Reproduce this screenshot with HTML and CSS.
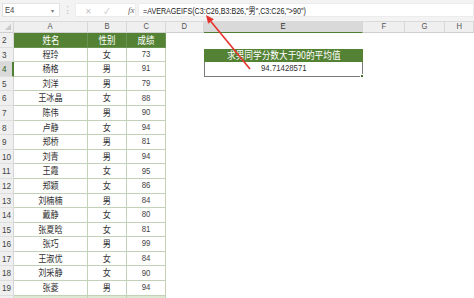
FILE: index.html
```html
<!DOCTYPE html>
<html lang="zh">
<head>
<meta charset="utf-8">
<link rel="stylesheet" href="styles.css">
</head>
<body>
<div class="app">
  <div class="fbar">
    <div class="namebox"><span class="t nb-text">E4</span><span class="nb-arrow">▾</span></div>
    <div class="dots">⁝</div>
    <div class="btns"><span class="btn-x">✕</span><span class="btn-ok">✓</span><span class="btn-fx">fx</span></div>
    <div class="formula"><span class="ft">=AVERAGEIFS(C3:C26,B3:B26,"男",C3:C26,"&gt;90")</span></div>
  </div>
  <div class="sheet">
    <div class="row hrow">
      <div class="corner"><span class="tri"></span></div>
      <div class="ch"><span class="t">A</span></div><div class="ch"><span class="t">B</span></div><div class="ch"><span class="t">C</span></div><div class="ch"><span class="t">D</span></div><div class="ch ch-act"><span class="t">E</span></div><div class="ch"><span class="t">F</span></div><div class="ch"><span class="t">G</span></div><div class="ch"><span class="t">H</span></div>
    </div>
    <div class="row">
      <div class="rh"><span class="t">2</span></div><div class="hd"><span class="t">姓名</span></div><div class="hd"><span class="t">性别</span></div><div class="hd"><span class="t">成绩</span></div><div class="c"></div><div class="c"></div><div class="c"></div><div class="c"></div><div class="c"></div>
    </div>
    <div class="row">
      <div class="rh"><span class="t">3</span></div><div class="td"><span class="t">程玲</span></div><div class="td"><span class="t">女</span></div><div class="td"><span class="t num">73</span></div><div class="c"></div><div class="c ghd"><span class="t">求男同学分数大于90的平均值</span></div><div class="c"></div><div class="c"></div><div class="c"></div>
    </div>
    <div class="row">
      <div class="rh rh-act"><span class="t">4</span></div><div class="td"><span class="t">杨格</span></div><div class="td"><span class="t">男</span></div><div class="td"><span class="t num">91</span></div><div class="c"></div><div class="c gval"><span class="t num">94.71428571</span><span class="handle"></span></div><div class="c"></div><div class="c"></div><div class="c"></div>
    </div>
    <div class="row">
      <div class="rh"><span class="t">5</span></div><div class="td"><span class="t">刘洋</span></div><div class="td"><span class="t">男</span></div><div class="td"><span class="t num">79</span></div><div class="c"></div><div class="c"></div><div class="c"></div><div class="c"></div><div class="c"></div>
    </div>
    <div class="row">
      <div class="rh"><span class="t">6</span></div><div class="td"><span class="t">王冰晶</span></div><div class="td"><span class="t">女</span></div><div class="td"><span class="t num">88</span></div><div class="c"></div><div class="c"></div><div class="c"></div><div class="c"></div><div class="c"></div>
    </div>
    <div class="row">
      <div class="rh"><span class="t">7</span></div><div class="td"><span class="t">陈伟</span></div><div class="td"><span class="t">男</span></div><div class="td"><span class="t num">90</span></div><div class="c"></div><div class="c"></div><div class="c"></div><div class="c"></div><div class="c"></div>
    </div>
    <div class="row">
      <div class="rh"><span class="t">8</span></div><div class="td"><span class="t">卢静</span></div><div class="td"><span class="t">女</span></div><div class="td"><span class="t num">94</span></div><div class="c"></div><div class="c"></div><div class="c"></div><div class="c"></div><div class="c"></div>
    </div>
    <div class="row">
      <div class="rh"><span class="t">9</span></div><div class="td"><span class="t">郑桥</span></div><div class="td"><span class="t">男</span></div><div class="td"><span class="t num">81</span></div><div class="c"></div><div class="c"></div><div class="c"></div><div class="c"></div><div class="c"></div>
    </div>
    <div class="row">
      <div class="rh"><span class="t">10</span></div><div class="td"><span class="t">刘青</span></div><div class="td"><span class="t">男</span></div><div class="td"><span class="t num">94</span></div><div class="c"></div><div class="c"></div><div class="c"></div><div class="c"></div><div class="c"></div>
    </div>
    <div class="row">
      <div class="rh"><span class="t">11</span></div><div class="td"><span class="t">王霞</span></div><div class="td"><span class="t">女</span></div><div class="td"><span class="t num">95</span></div><div class="c"></div><div class="c"></div><div class="c"></div><div class="c"></div><div class="c"></div>
    </div>
    <div class="row">
      <div class="rh"><span class="t">12</span></div><div class="td"><span class="t">郑颖</span></div><div class="td"><span class="t">女</span></div><div class="td"><span class="t num">86</span></div><div class="c"></div><div class="c"></div><div class="c"></div><div class="c"></div><div class="c"></div>
    </div>
    <div class="row">
      <div class="rh"><span class="t">13</span></div><div class="td"><span class="t">刘楠楠</span></div><div class="td"><span class="t">男</span></div><div class="td"><span class="t num">84</span></div><div class="c"></div><div class="c"></div><div class="c"></div><div class="c"></div><div class="c"></div>
    </div>
    <div class="row">
      <div class="rh"><span class="t">14</span></div><div class="td"><span class="t">戴静</span></div><div class="td"><span class="t">女</span></div><div class="td"><span class="t num">80</span></div><div class="c"></div><div class="c"></div><div class="c"></div><div class="c"></div><div class="c"></div>
    </div>
    <div class="row">
      <div class="rh"><span class="t">15</span></div><div class="td"><span class="t">张夏晗</span></div><div class="td"><span class="t">女</span></div><div class="td"><span class="t num">81</span></div><div class="c"></div><div class="c"></div><div class="c"></div><div class="c"></div><div class="c"></div>
    </div>
    <div class="row">
      <div class="rh"><span class="t">16</span></div><div class="td"><span class="t">张巧</span></div><div class="td"><span class="t">男</span></div><div class="td"><span class="t num">99</span></div><div class="c"></div><div class="c"></div><div class="c"></div><div class="c"></div><div class="c"></div>
    </div>
    <div class="row">
      <div class="rh"><span class="t">17</span></div><div class="td"><span class="t">王淑优</span></div><div class="td"><span class="t">女</span></div><div class="td"><span class="t num">84</span></div><div class="c"></div><div class="c"></div><div class="c"></div><div class="c"></div><div class="c"></div>
    </div>
    <div class="row">
      <div class="rh"><span class="t">18</span></div><div class="td"><span class="t">刘采静</span></div><div class="td"><span class="t">女</span></div><div class="td"><span class="t num">90</span></div><div class="c"></div><div class="c"></div><div class="c"></div><div class="c"></div><div class="c"></div>
    </div>
    <div class="row">
      <div class="rh"><span class="t">19</span></div><div class="td"><span class="t">张菱</span></div><div class="td"><span class="t">男</span></div><div class="td"><span class="t num">94</span></div><div class="c"></div><div class="c"></div><div class="c"></div><div class="c"></div><div class="c"></div>
    </div>
    <div class="row">
      <div class="rh"></div><div class="td band"></div><div class="td band"></div><div class="td band"></div><div class="c"></div><div class="c"></div><div class="c"></div><div class="c"></div><div class="c"></div>
    </div>
  </div>
  <svg class="arrow" width="474" height="298" viewBox="0 0 474 298">
    <line x1="250" y1="69" x2="210.9" y2="21.4" stroke="#e5322d" stroke-width="1.6"/>
    <polygon points="206,15 213.9,19.2 208.1,23.7" fill="#e5322d"/>
  </svg>
</div>
</body>
</html>
```
FILE: styles.css
```css
* { box-sizing: border-box; margin: 0; padding: 0; }
html, body { width: 474px; height: 298px; overflow: hidden; background: #fff; }
body {
  font-family: "Noto Sans CJK SC", "Noto Sans", sans-serif;
  color: #333;
}
.app { position: relative; width: 474px; height: 298px; overflow: hidden; }

.t { display: inline-block; transform: scaleX(0.85); white-space: nowrap; }

/* formula bar */
.fbar {
  height: 21.7px;
  background: #f3f3f3;
  border-bottom: 1px solid #dadada;
  display: flex;
  align-items: center;
  padding: 0 0 0 2px;
}
.namebox {
  width: 58px; height: 14px;
  background: #fff;
  border: 1px solid #e2e2e2;
  display: flex; align-items: center; justify-content: space-between;
  padding: 0 5px 0 2px;
  font-family: "Liberation Sans", sans-serif;
  font-size: 9px; color: #444;
}
.nb-text { transform-origin: left center; }
.nb-arrow { font-size: 6px; color: #777; }
.dots { width: 15px; text-align: center; color: #c4c4c4; font-size: 10px; line-height: 1; }
.btns {
  width: 61px; height: 14px; background: #fff;
  border: 1px solid #ececec;
  display: flex; align-items: center;
  padding-left: 9px;
  font-size: 8px; color: #c2c2c2;
}
.btn-x { width: 19px; }
.btn-ok { width: 24px; }
.btn-fx { font-family: "Liberation Serif", serif; font-style: italic; font-size: 9px; color: #666; }
.formula {
  flex: 1; height: 14px; margin-left: 2px;
  background: #fff;
  border: 1px solid #ececec;
  padding-left: 4px;
  display: flex; align-items: center;
  font-family: "Liberation Sans", "Noto Sans CJK SC", sans-serif;
  font-size: 8.8px; color: #222; white-space: nowrap;
}
.ft { display: inline-block; transform: scaleX(0.81); transform-origin: left center; }

/* sheet */
.sheet { display: flex; flex-direction: column; }
.row {
  display: grid;
  grid-template-columns: 14px 74px 39px 39px 38px 159px 42px 40px 29px;
  height: 14.6px;
}
.row.hrow { height: 11.3px; }
.row > div {
  display: flex; align-items: center; justify-content: center;
  white-space: nowrap; overflow: hidden;
  font-size: 9.6px; line-height: 1;
}
.corner { background: #efefef; border-right: 1px solid #d6d6d6; border-bottom: 1px solid #cfcfcf; position: relative; }
.tri {
  position: absolute; right: 2px; bottom: 2px;
  width: 0; height: 0;
  border-left: 6px solid transparent;
  border-bottom: 6px solid #c9c9c9;
}
.ch {
  background: #efefef;
  border-right: 1px solid #d8d8d8;
  border-bottom: 1px solid #cfcfcf;
  font-family: "Liberation Sans", sans-serif;
  color: #555;
  font-size: 9px !important;
}
.ch-act { background: #d9d9d9; border-bottom: 1px solid #4f7f34; color: #333; }
.rh {
  background: #efefef;
  border-right: 1px solid #d6d6d6;
  border-bottom: 1px solid #dedede;
  font-family: "Liberation Sans", sans-serif;
  color: #444;
  justify-content: flex-start !important;
  padding-left: 2px;
  font-size: 9.6px !important;
}
.rh .t { transform-origin: left center; }
.rh-act { background: #d9d9d9; border-right: 2px solid #4f7f34; color: #2f5d1e; }
.hd {
  background: #548235;
  color: #fff;
  border-right: 1px solid #6a9350;
  border-bottom: 1px solid #6a9350;
  font-size: 10px !important;
}
.td {
  background: #fff;
  color: #333;
  border-right: 1px solid #c3d1b9;
  border-bottom: 1px solid #c3d1b9;
}
.td.band { background: #dde8d3; }
.num {
  font-family: "Liberation Sans", sans-serif;
  font-size: 9.2px;
  color: #444;
}
.ghd {
  background: #548235;
  color: #fff;
  font-size: 10.2px !important;
  border-top: 1px solid #fff;
}
.gval {
  position: relative;
  overflow: visible !important;
  border: 1px solid #7a7a7a;
  border-top: none;
  background: #fff;
}
.gval .num { color: #333; }
.handle {
  position: absolute; right: -2px; bottom: -2px;
  width: 4px; height: 4px;
  background: #3d6b2a;
  border: 1px solid #fff;
}
.arrow { position: absolute; left: 0; top: 0; pointer-events: none; }
```
